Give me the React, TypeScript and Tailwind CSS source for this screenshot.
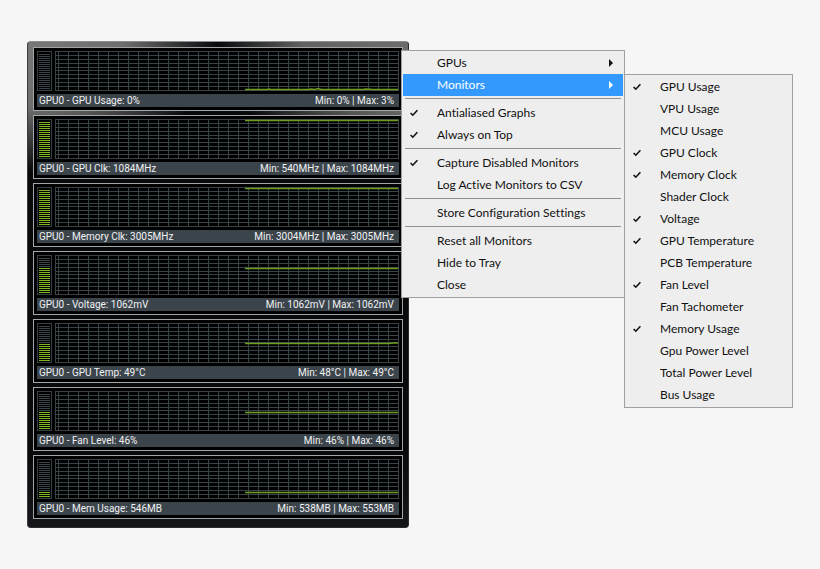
import { ReactNode } from 'react';

interface Monitor {
  label: string;
  range: string;
  // lit segments in the gauge, out of 18
  level: number;
  points: string;
}

interface MenuEntry {
  label: string;
  checked?: boolean;
  separated?: boolean;
  submenu?: MenuEntry[];
  open?: boolean;
}

const monitors: Monitor[] = [
  { label: 'GPU0 - GPU Usage: 0%', range: 'Min: 0% | Max: 3%', level: 0, points: '190,38.5 212,38.5 214,38 216,38.5 254,38.5 256,38 260,38.5 263,37.5 266,38.5 308,38.5 311,38 318,38.5 343,38.5' },
  { label: 'GPU0 - GPU Clk: 1084MHz', range: 'Min: 540MHz | Max: 1084MHz', level: 18, points: '190,1.5 343,1.5' },
  { label: 'GPU0 - Memory Clk: 3005MHz', range: 'Min: 3004MHz | Max: 3005MHz', level: 18, points: '190,1.5 343,1.5' },
  { label: 'GPU0 - Voltage: 1062mV', range: 'Min: 1062mV | Max: 1062mV', level: 13, points: '190,13.5 343,13.5' },
  { label: 'GPU0 - GPU Temp: 49°C', range: 'Min: 48°C | Max: 49°C', level: 9, points: '190,20.5 334,20.5 337,20 343,20' },
  { label: 'GPU0 - Fan Level: 46%', range: 'Min: 46% | Max: 46%', level: 9, points: '190,21.5 343,21.5' },
  { label: 'GPU0 - Mem Usage: 546MB', range: 'Min: 538MB | Max: 553MB', level: 3, points: '190,33.5 343,33.5' },
];

const monitorMenu: MenuEntry[] = [
  { label: 'GPU Usage', checked: true },
  { label: 'VPU Usage' },
  { label: 'MCU Usage' },
  { label: 'GPU Clock', checked: true },
  { label: 'Memory Clock', checked: true },
  { label: 'Shader Clock' },
  { label: 'Voltage', checked: true },
  { label: 'GPU Temperature', checked: true },
  { label: 'PCB Temperature' },
  { label: 'Fan Level', checked: true },
  { label: 'Fan Tachometer' },
  { label: 'Memory Usage', checked: true },
  { label: 'Gpu Power Level' },
  { label: 'Total Power Level' },
  { label: 'Bus Usage' },
];

const mainMenu: MenuEntry[] = [
  { label: 'GPUs', submenu: [] },
  { label: 'Monitors', submenu: monitorMenu, open: true },
  { label: 'Antialiased Graphs', checked: true, separated: true },
  { label: 'Always on Top', checked: true },
  { label: 'Capture Disabled Monitors', checked: true, separated: true },
  { label: 'Log Active Monitors to CSV' },
  { label: 'Store Configuration Settings', separated: true },
  { label: 'Reset all Monitors', separated: true },
  { label: 'Hide to Tray' },
  { label: 'Close' },
];

const segments = Array.from({ length: 18 }, (_, i) => i);
const columns = [0, ...Array.from({ length: 35 }, (_, i) => 3 + i * 10)];
const rows = [0, 4, 8, 12, 16, 19, 23, 27, 31, 35, 39];

function Gauge({ level }: { level: number }) {
  return (
    <svg className="h-10 w-[15px] shrink-0" viewBox="0 0 15 40" shapeRendering="crispEdges">
      <rect x="0.5" y="0.5" width="14" height="39" fill="#000" stroke="#353f44" />
      {segments.map((i) => (
        <rect key={i} x="2" y={37 - i * 2} width="11" height="1" fill={i < level ? '#7fb523' : '#39444b'} />
      ))}
    </svg>
  );
}

function Graph({ points }: { points: string }) {
  return (
    <svg className="h-10 min-w-0 flex-1" viewBox="0 0 344 40" preserveAspectRatio="none">
      <g fill="#38444a" shapeRendering="crispEdges">
        {columns.map((x) => (
          <rect key={x} x={x} y="0" width="1" height="40" />
        ))}
        {rows.map((y) => (
          <rect key={y} x="0" y={y} width="344" height="1" />
        ))}
      </g>
      <polyline points={points} fill="none" stroke="#6f9d1f" strokeWidth="1.6" />
    </svg>
  );
}

function MonitorPanel({ monitor }: { monitor: Monitor }) {
  return (
    <section className="flex flex-col gap-[3px] border border-[#a3a6a6] bg-black p-[3px]">
      <div className="flex gap-[3px]">
        <Gauge level={monitor.level} />
        <Graph points={monitor.points} />
      </div>
      <div className="flex h-[13px] items-center justify-between bg-[#3c444b] pr-[5px] pl-[2px] text-[10px] leading-[13px] whitespace-nowrap text-[#f0f2f4]">
        <span>{monitor.label}</span>
        <span>{monitor.range}</span>
      </div>
    </section>
  );
}

function CheckMark() {
  return (
    <svg className="h-2 w-2" viewBox="0 0 8 8" fill="none" stroke="currentColor" strokeWidth="1.6">
      <path d="M0.6 4 L2.8 6.2 L7.4 1.2" />
    </svg>
  );
}

function MenuItem({ entry }: { entry: MenuEntry }) {
  return (
    <>
      {entry.separated && <li role="separator" className="mx-0.5 mt-0.5 mb-[3px] h-px bg-[#919191]" />}
      <li role="none" className="relative">
        <button
          type="button"
          role={entry.submenu ? 'menuitem' : 'menuitemcheckbox'}
          aria-checked={entry.submenu ? undefined : !!entry.checked}
          aria-expanded={entry.submenu ? !!entry.open : undefined}
          className={`flex h-[22px] w-full items-center pr-2.5 text-left whitespace-nowrap ${
            entry.open ? 'bg-[#3399ff] text-white' : 'text-[#111111] hover:bg-[#3399ff] hover:text-white'
          }`}
        >
          <span className="flex w-[34px] shrink-0 pl-[7px]">{entry.checked && <CheckMark />}</span>
          <span className="flex-1">{entry.label}</span>
          {entry.submenu && (
            <svg className="h-2 w-1" viewBox="0 0 4 8" fill="currentColor">
              <path d="M0 0 L4 4 L0 8 Z" />
            </svg>
          )}
        </button>
        {entry.open && entry.submenu && (
          <div className="absolute top-0 left-full z-10 ml-px w-[169px]">
            <Menu label={entry.label}>
              {entry.submenu.map((child) => (
                <MenuItem key={child.label} entry={child} />
              ))}
            </Menu>
          </div>
        )}
      </li>
    </>
  );
}

function Menu({ label, children }: { label: string; children: ReactNode }) {
  return (
    <ul
      role="menu"
      aria-label={label}
      className="border border-[#a0a0a0] bg-[#eeeeee] p-px font-[Lato,sans-serif] text-xs [font-variant-ligatures:no-common-ligatures]"
    >
      {children}
    </ul>
  );
}

export default function App() {
  return (
    <main className="min-h-screen bg-[#f6f6f6] px-[27px] py-[41px] font-[Roboto,Arial,sans-serif]">
      <div className="relative max-w-[382px]">
        <div className="flex flex-col gap-1 rounded-[4px] border border-t-[#8b8d8d] border-r-[#2a2b2e] border-b-[#2a2b2e] border-l-[#3c3d3f] bg-[#08090b] bg-[radial-gradient(ellipse_190px_130px_at_0_0,#777777_0%,#6e6e6e_50%,transparent_100%),radial-gradient(ellipse_190px_130px_at_100%_0,#6c6c6c_0%,#626262_55%,transparent_100%),linear-gradient(to_bottom,transparent_85%,#15171a_100%)] p-[5px] pb-2">
          {monitors.map((monitor) => (
            <MonitorPanel key={monitor.label} monitor={monitor} />
          ))}
        </div>
        <div className="absolute top-[9px] left-[374px] w-56">
          <Menu label="Options">
            {mainMenu.map((entry) => (
              <MenuItem key={entry.label} entry={entry} />
            ))}
          </Menu>
        </div>
      </div>
    </main>
  );
}
